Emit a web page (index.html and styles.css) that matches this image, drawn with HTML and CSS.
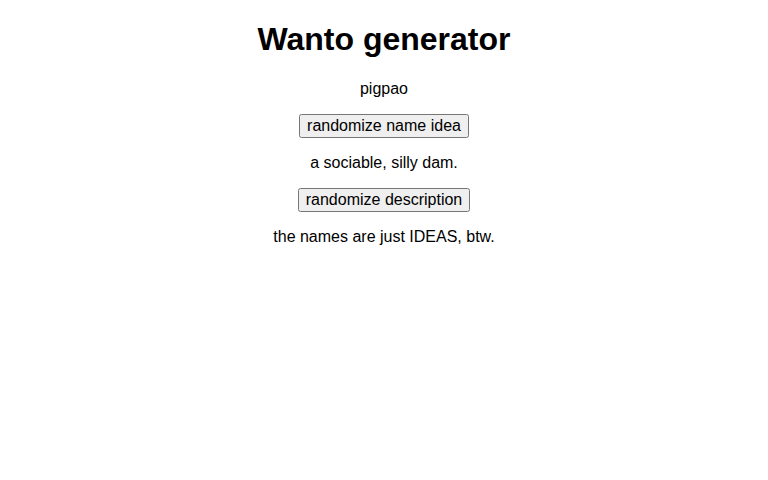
FILE: index.html
```html
<!DOCTYPE html>
<html lang="en">
<head>
    <meta charset="UTF-8">
    <meta name="viewport" content="width=device-width, initial-scale=1.0">
    <title>Wanto generator</title>
    <link rel="stylesheet" href="styles.css">
</head>
<body>
    <h1>Wanto generator</h1>
    <p id="name">pigpao</p>
    <p><button id="nameBtn">randomize name idea</button></p>
    <p id="desc">a sociable, silly dam.</p>
    <p><button id="descBtn">randomize description</button></p>
    <p>the names are just IDEAS, btw.</p>
</body>
</html>
```

FILE: styles.css
```css
body {
    font-family: 'Liberation Sans', Arial, sans-serif;
    margin: 0;
    text-align: center;
    color: #000;
    background: #fff;
}
h1 {
    font-size: 2em;
}
button {
    font-family: inherit;
    font-size: 16px;
}
```
